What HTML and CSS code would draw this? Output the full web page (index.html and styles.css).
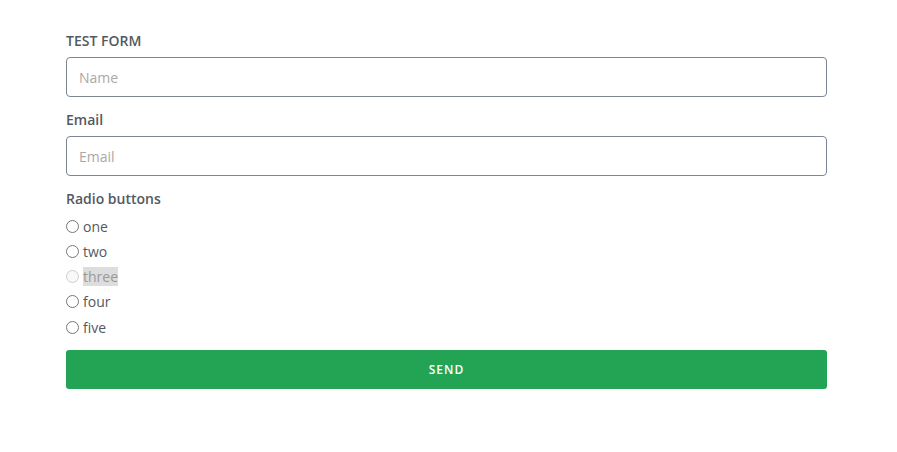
FILE: index.html
```html
<!DOCTYPE html>
<html>
<head>
<meta charset="utf-8">
<link rel="stylesheet" href="styles.css">
</head>
<body>
<form class="form">
  <div class="group">
    <label class="label" for="name">TEST FORM</label>
    <input class="input" id="name" type="text" placeholder="Name">
  </div>
  <div class="group">
    <label class="label" for="email">Email</label>
    <input class="input" id="email" type="email" placeholder="Email">
  </div>
  <div class="group radios">
    <div class="label">Radio buttons</div>
    <label class="option"><input type="radio" name="r"><span>one</span></label>
    <label class="option"><input type="radio" name="r"><span>two</span></label>
    <label class="option disabled"><input type="radio" name="r" disabled><span>three</span></label>
    <label class="option"><input type="radio" name="r"><span>four</span></label>
    <label class="option five"><input type="radio" name="r"><span>five</span></label>
  </div>
  <button class="send" type="button">SEND</button>
</form>
</body>
</html>
```
FILE: styles.css
```css
html, body {
  margin: 0;
  padding: 0;
  background: #ffffff;
}
body {
  font-family: "Open Sans", "Liberation Sans", sans-serif;
  color: #54595f;
}
.form {
  width: 761px;
  margin: 0 0 0 66px;
  padding-top: 31px;
  display: flex;
  flex-direction: column;
}
.group {
  display: flex;
  flex-direction: column;
  margin-bottom: 13px;
}
.label {
  font-size: 14px;
  font-weight: 600;
  line-height: 20px;
  margin-bottom: 6px;
  color: #54595f;
}
.input {
  box-sizing: border-box;
  height: 40px;
  width: 100%;
  border: 1px solid #7c8793;
  border-radius: 4px;
  padding: 0 12px;
  font-family: "Open Sans", "Liberation Sans", sans-serif;
  font-size: 14px;
  color: #54595f;
  background: #fff;
  outline: none;
}
.input::placeholder {
  color: #aaa8a6;
}
.radios {
  margin-bottom: 10px;
}
.radios .label {
  margin-bottom: 0;
}
.option {
  display: flex;
  align-items: center;
  height: 25px;
  font-size: 14px;
  color: #54595f;
}
.option:first-of-type {
  margin-top: 5px;
}
.option.five {
  margin-top: 1px;
}
.option input {
  margin: 0 4px 0 0;
  width: 13px;
  height: 13px;
}
.option.disabled span {
  color: #999999;
  background: #dddddd;
}
.send {
  height: 39px;
  width: 100%;
  border: none;
  border-radius: 3px;
  background: #23a455;
  color: #ffffff;
  font-family: "Open Sans", "Liberation Sans", sans-serif;
  font-size: 12px;
  font-weight: 600;
  letter-spacing: 1px;
  cursor: pointer;
}
```
